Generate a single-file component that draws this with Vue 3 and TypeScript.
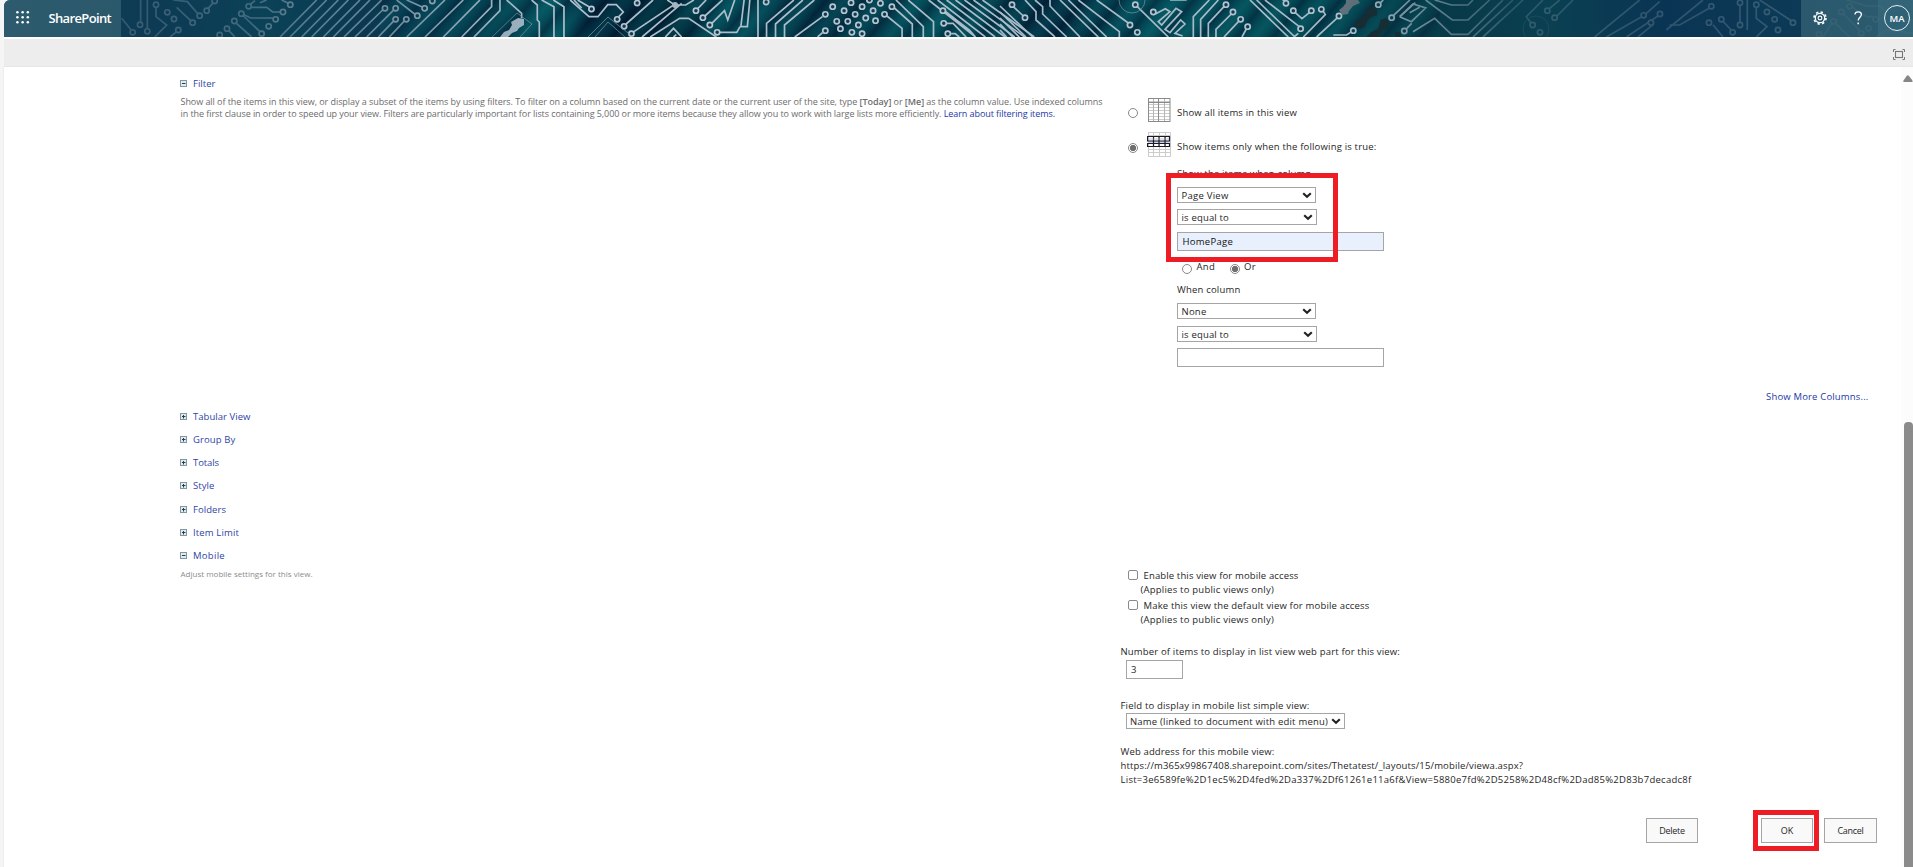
<script setup lang="ts">
import type { Directive } from 'vue'

// Spreads the letters of a single line so that it fills the given width.
const vFit: Directive<HTMLElement, number> = {
  mounted(el, binding) {
    const count = (el.textContent ?? '').length
    const natural = el.getBoundingClientRect().width
    el.style.letterSpacing = `${(binding.value - natural) / count}px`
  },
}

interface TraceGroup {
  transform: string
  sx: number
  path: string
  dots: [number, number][]
}

const bundle = Array.from({ length: 7 }, (_, i) => `M${1050 + i * 22} 0L${1165 + i * 24} 111`).join('')

const groups: TraceGroup[] = [
  {
    transform: 'translate(120 0) scale(.3333)',
    sx: 3,
    path:
      'M62 0V66M82 0V86M5 55L34 91M108 22V50L140 75L104 111M170 22L212 62M160 0L202 5L234 42M264 26L278 10M170 95L150 111' +
      'M392 12L405 2M394 22H440L458 36H480M372 44L392 54H458M348 69L395 111M326 91L345 111M420 95L370 48M505 10L485 0M440 0L420 8' +
      'M480 111L590 0M510 111L620 0M545 111L655 0M575 111L685 0M610 111L720 0M640 111L750 0M672 111L785 0M705 111L788 30M740 111L820 31' +
      'M775 111L820 64M808 111L852 64M860 111L975 0M830 0L884 42M860 0L907 21M915 111L1030 0M970 111L1080 0M1115 0V20L1025 111' +
      'M1140 0V32L1062 111M1160 0L1205 40V55M1235 0L1252 15V60L1258 66V111M1265 0L1302 20V111M1300 0L1332 20V111M1362 0L1385 24',
    dots: [[60, 74], [82, 94], [38, 97], [108, 14], [142, 37], [162, 57], [175, 90], [218, 68], [239, 47], [260, 32], [284, 3], [386, 19], [364, 41], [343, 63], [321, 86], [299, 105], [446, 79], [467, 58], [489, 36], [511, 14], [425, 101], [795, 25], [827, 25], [827, 58], [859, 58], [892, 47], [914, 25], [937, 3]],
  },
  {
    transform: 'translate(500 0) scale(.4082 .3333)',
    sx: 2.45,
    path:
      'M172 0L218 50H240L264 14H285L302 36L291 50M190 0L218 20M309 72L375 0M328 95L425 15H455L475 0M427 14L410 0' +
      'M348 111L445 10M368 111L440 55H462L530 111M405 111L425 85L445 111M425 111L432 104M485 25L505 0M502 48L545 0M519 70L550 32L558 60L575 0M538 97H580L588 80' +
      'M612 0L606 80H590L598 0M632 0V111M720 0L653 70V111M742 0L675 72V111M770 0L697 75V111M790 50L722 111M790 98L778 111' +
      'M948 48L985 85V111M966 24L1010 72V111M970 0L1037 80V111M1000 0L1062 65V111M1092 35L1150 90L1165 111M1095 70H1110L1142 111M1105 101H1115L1125 111' +
      bundle,
    dots: [[224, 27], [336, 9], [287, 58], [304, 79], [322, 101], [480, 32], [497, 53], [514, 75], [532, 97], [652, 6], [797, 43], [815, 20], [797, 92], [825, 64], [834, 86], [852, 64], [843, 32], [870, 43], [887, 20], [860, 8], [905, 0], [862, 97], [878, 75], [896, 54], [914, 32], [932, 10], [887, 101], [920, 62], [942, 43], [960, 20], [1085, 32], [1087, 70], [1097, 101]],
  },
  {
    transform: 'translate(1000 0) scale(.3333)',
    sx: 3,
    path:
      'M40 20L70 48M0 18L98 111M0 36L78 111M0 54L58 111M0 72L38 111M0 90L20 111M75 0L108 35V60L165 111M105 0L128 20V42L200 111M150 0V18L240 111M180 0L295 111M205 0L320 111' +
      'M235 0L358 95V111M290 0L385 69M412 20L505 111M510 0H560M466 42L496 26L510 35L475 65L485 75L528 25L545 35L495 88L510 98L542 60L555 72L525 100L548 108' +
      'M580 111V50L628 0M602 111V58L655 0M625 111V70L672 20M648 111V88L694 42M672 111L716 64M726 111L739 87' +
      'M750 0L865 111M770 0L885 111M795 0L898 80M882 111L895 100M848 0L856 4M886 38L906 56L929 37M970 34L976 44L910 111M1012 54L950 111M1055 95L1040 105H1000' +
      'M1142 8L1150 0M1180 47L1230 0M1200 50L1246 8M1220 86L1235 70',
    dots: [[36, 14], [75, 53], [390, 75], [412, 97], [406, 14], [460, 36], [678, 14], [699, 36], [722, 58], [743, 80], [902, 86], [858, 10], [880, 32], [934, 32], [964, 28], [1017, 48], [1060, 92], [1135, 14], [1175, 53], [1213, 93]],
  },
  {
    transform: 'translate(1413 0) scale(.3333)',
    sx: 3,
    path:
      'M-40 50L0 12L38 24L-5 65L-40 50M-10 38L20 22M0 95L65 55L115 103H165L270 0M38 0L118 60H165L230 0M65 0L115 15H165L180 0M180 111L300 0M210 111L330 0' +
      'M353 68L340 50L390 0M410 25L440 0M432 48L480 0M545 111L680 0M580 111L686 50M640 111L735 48M700 40L740 5M770 75H800L890 24M675 111L720 74' +
      'M981 14V68M1003 0V90M1030 22V55L1062 80L1030 111M930 64L955 90M1040 0L1135 62M900 74L930 111M870 0L760 90' +
      'M1268 70L1310 111M1292 42L1340 92M1316 20L1360 50H1382M1300 0L1360 18H1400L1440 50L1500 60M1230 111L1256 70M1390 111L1420 90L1500 100',
    dots: [[359, 75], [381, 97], [403, 32], [425, 53], [692, 46], [714, 68], [741, 42], [895, 19], [888, 68], [925, 58], [959, 97], [981, 75], [981, 8], [1030, 14], [1062, 36], [1085, 58], [1140, 68], [1095, 90], [1262, 64], [1310, 19], [1388, 58], [1285, 36], [1345, 100], [1367, 85], [1218, 103]],
  },
]

const waffle = Array.from({ length: 9 }, (_, i) => ({ x: 1 + (i % 3) * 5.2, y: 1 + Math.floor(i / 3) * 5 }))

const sections = [
  { label: 'Tabular View', width: 57.5 },
  { label: 'Group By', width: 42.5 },
  { label: 'Totals', width: 26 },
  { label: 'Style', width: 21.5 },
  { label: 'Folders', width: 33 },
  { label: 'Item Limit', width: 46 },
]
</script>

<template>
  <div class="page">
    <header class="suite">
      <svg class="circuit" width="1909" height="37" viewBox="4 0 1909 37" aria-hidden="true">
        <defs>
          <linearGradient id="base" gradientUnits="userSpaceOnUse" x1="0" y1="0" x2="1913" y2="0">
            <stop offset="0" stop-color="#154359" /><stop offset=".08" stop-color="#0d3a54" />
            <stop offset=".14" stop-color="#0b4258" /><stop offset=".19" stop-color="#0a3850" />
            <stop offset=".23" stop-color="#063c50" /><stop offset=".26" stop-color="#053c4c" />
            <stop offset=".29" stop-color="#075761" /><stop offset=".31" stop-color="#021c34" />
            <stop offset=".35" stop-color="#02202f" /><stop offset=".38" stop-color="#064b57" />
            <stop offset=".43" stop-color="#052f43" /><stop offset=".49" stop-color="#064f5a" />
            <stop offset=".55" stop-color="#032238" /><stop offset=".6" stop-color="#06505c" />
            <stop offset=".67" stop-color="#054a55" /><stop offset=".75" stop-color="#073947" />
            <stop offset=".81" stop-color="#0a4052" /><stop offset=".87" stop-color="#0a3453" />
            <stop offset="1" stop-color="#0e4059" />
          </linearGradient>
          <linearGradient id="bands" gradientUnits="userSpaceOnUse" x1="0" y1="0" x2="11" y2="9" spreadMethod="reflect">
            <stop offset="0" stop-color="#077078" stop-opacity=".3" /><stop offset="1" stop-color="#011a31" stop-opacity=".5" />
          </linearGradient>
          <linearGradient id="fade" gradientUnits="userSpaceOnUse" x1="0" y1="0" x2="1913" y2="0">
            <stop offset=".06" stop-color="#3a3a3a" /><stop offset=".13" stop-color="#505050" />
            <stop offset=".16" stop-color="#7c7c7c" /><stop offset=".21" stop-color="#a0a0a0" /><stop offset=".25" stop-color="#ddd" />
            <stop offset=".29" stop-color="#fff" /><stop offset=".7" stop-color="#f2f2f2" />
            <stop offset=".75" stop-color="#888" /><stop offset=".79" stop-color="#363636" /><stop offset="1" stop-color="#404040" />
          </linearGradient>
          <mask id="veil" maskUnits="userSpaceOnUse" x="0" y="0" width="1913" height="37">
            <rect width="1913" height="37" fill="url(#fade)" />
          </mask>
        </defs>
        <rect width="1913" height="37" fill="url(#base)" />
        <g mask="url(#veil)">
          <rect x="380" width="1060" height="37" fill="url(#bands)" />
          <g v-for="g in groups" :key="g.transform" :transform="g.transform">
            <path :d="g.path" class="trace" />
            <ellipse v-for="(d, i) in g.dots" :key="i" :cx="d[0]" :cy="d[1]" :rx="2.6 * g.sx" ry="7.8" class="via" />
          </g>
          <g class="thin">
            <path d="M492 37L517 13L532 24L520 37M588 37L608 17L633 37M595 37L608 22L625 37" />
            <circle cx="1132" cy="0" r="13" />
            <circle cx="1536" cy="29" r="13" />
          </g>
          <path class="solid" d="M500 37L504 32L509 30L512 25L511 22L518 18L524 19V25L519 28L517 31L512 33L508 37Z" />
          <circle cx="675" cy="5" r="3" class="solid" />
          <path class="grey" d="M1339 10L1343 7L1346 3V0H1358L1360 3L1353 6L1349 11L1348 14L1342 15Z" />
          <path class="black" d="M1354 25L1357 20L1362 18L1366 13L1365 10L1370 6L1377 9V15L1371 17L1367 21L1365 27L1360 29ZM1366 37L1371 32L1378 29L1380 23L1380 20L1386 18L1390 23L1388 29L1383 30L1378 37ZM1395 32H1400L1401 37H1395Z" />
        </g>
      </svg>
      <div class="brand">
        <svg width="14" height="13" viewBox="0 0 14 13" class="waffle">
          <circle v-for="(d, i) in waffle" :key="i" :cx="d.x + 0.4" :cy="d.y + 0.3" r="1.25" fill="#fff" />
        </svg>
        <span v-fit="62.5" class="name">SharePoint</span>
      </div>
      <div class="tools">
        <svg class="gear" width="14" height="14" viewBox="0 0 14 14" fill="none" stroke="#fff">
          <circle cx="7" cy="7" r="4.7" stroke-width="1.2" />
          <circle cx="7" cy="7" r="6" stroke-width="1.6" stroke-dasharray="2.35 2.35" />
          <circle cx="7" cy="7" r="1.9" stroke-width="1.1" />
        </svg>
        <svg class="help" width="9" height="14" viewBox="0 0 9 14" fill="none" stroke="#fff" stroke-width="1.3">
          <path d="M1 3.6C1 1.6 2.6.8 4.2.8C6 .8 7.4 1.8 7.4 3.6C7.4 6.1 4.2 6.4 4.2 9.6" />
          <path d="M4.2 11.6V13.2" stroke-width="1.5" />
        </svg>
        <div class="me"><span class="avatar">MA</span></div>
      </div>
    </header>

    <div class="ribbon">
      <svg width="13" height="12" viewBox="0 0 13 12" fill="none" stroke="#777">
        <rect x="2.5" y="2.5" width="7" height="6" stroke-width="1.1" />
        <path d="M.5 3V.5H2.5M9.5.5H11.5V3M.5 8V10.5H2.5M9.5 10.5H11.5V8" stroke-width="1" />
      </svg>
    </div>

    <main class="body">
      <div class="content">
        <section class="row filter">
          <div class="left">
            <h3 class="head">
              <svg class="toggle" width="7" height="7" viewBox="0 0 7 7"><rect x=".5" y=".5" width="6" height="6" /><path d="M2 3.5H5.5" /></svg>
              <span v-fit="22.5">Filter</span>
            </h3>
            <div class="desc">
              <div><span v-fit="922">Show all of the items in this view, or display a subset of the items by using filters. To filter on a column based on the current date or the current user of the site, type <b>[Today]</b> or <b>[Me]</b> as the column value. Use indexed columns</span></div>
              <div><span v-fit="874.5">in the first clause in order to speed up your view. Filters are particularly important for lists containing 5,000 or more items because they allow you to work with large lists more efficiently. <a>Learn about filtering items.</a></span></div>
            </div>
          </div>

          <div class="right">
            <div class="choice">
              <i class="radio"></i>
              <svg class="grid" width="24" height="25" viewBox="0 0 24 25" fill="none">
                <path d="M1 3.5H23M1 6.5H23M1 9.5H23M1 12.5H23M1 15.5H23M1 18.5H23M1 21.5H23" stroke="#ccc" />
                <path d="M6.5 1V24M17.5 1V24" stroke="#b5b5b5" />
                <path d="M11.5 1V24M1 4.5H23" stroke="#8a8a8a" />
                <rect x="1.5" y=".5" width="21.5" height="23" stroke="#8a8a8a" />
              </svg>
              <span v-fit="120">Show all items in this view</span>
            </div>
            <div class="choice second">
              <i class="radio on"></i>
              <svg class="grid" width="24" height="25" viewBox="0 0 24 25" fill="none">
                <path d="M1 .5H23.5V24.5H1.5V0M1 3.5H23M1 17.5H23M1 20.5H23M6.5 0V25M12.5 0V25M18.5 0V25" stroke="#ccc" />
                <rect x="1" y="9" width="22" height="2" fill="#c9d3e8" />
                <path d="M.5 4.5H22.5V9H.5ZM.5 11.5H22.5V14.5H.5ZM6.5 4V15M12 4V15M18 4V15" stroke="#191927" stroke-width="1.2" />
                <path d="M1 7H22" stroke="#aaa" stroke-width=".7" />
              </svg>
              <span v-fit="199.5">Show items only when the following is true:</span>
            </div>

            <div class="clauses">
              <div class="cap"><span v-fit="134.5">Show the items when column</span></div>
              <div class="select s1"><span v-fit="47">Page View</span><svg class="chev" viewBox="0 0 10 7"><path d="M1.2 1.3L5 4.7L8.8 1.3" /></svg></div>
              <div class="select s2"><span v-fit="47.5">is equal to</span><svg class="chev" viewBox="0 0 10 7"><path d="M1.2 1.3L5 4.7L8.8 1.3" /></svg></div>
              <div class="input filled"><span v-fit="50.5">HomePage</span></div>
              <div class="mark mark-filter"></div>
              <div class="andor">
                <i class="radio"></i><span v-fit="18.5" class="and">And</span>
                <i class="radio on"></i><span v-fit="12" class="or">Or</span>
              </div>
              <div class="cap when"><span v-fit="63.5">When column</span></div>
              <div class="select s3"><span v-fit="25">None</span><svg class="chev" viewBox="0 0 10 7"><path d="M1.2 1.3L5 4.7L8.8 1.3" /></svg></div>
              <div class="select s4"><span v-fit="47.5">is equal to</span><svg class="chev" viewBox="0 0 10 7"><path d="M1.2 1.3L5 4.7L8.8 1.3" /></svg></div>
              <div class="input blank"></div>
            </div>
            <div class="more"><a v-fit="102.5">Show More Columns...</a></div>
          </div>
        </section>

        <nav class="sections">
          <h3 v-for="s in sections" :key="s.label" class="head">
            <svg class="toggle" width="7" height="7" viewBox="0 0 7 7"><rect x=".5" y=".5" width="6" height="6" /><path d="M2 3.5H5.5M3.5 2V5.5" /></svg>
            <span v-fit="s.width">{{ s.label }}</span>
          </h3>
        </nav>

        <section class="row mobile">
          <div class="left">
            <h3 class="head">
              <svg class="toggle" width="7" height="7" viewBox="0 0 7 7"><rect x=".5" y=".5" width="6" height="6" /><path d="M2 3.5H5.5" /></svg>
              <span v-fit="32">Mobile</span>
            </h3>
            <div class="note"><span v-fit="132">Adjust mobile settings for this view.</span></div>
          </div>
          <div class="right">
            <div class="check"><i class="box"></i><span v-fit="155">Enable this view for mobile access</span></div>
            <div class="sub"><span v-fit="133.5">(Applies to public views only)</span></div>
            <div class="check next"><i class="box"></i><span v-fit="226">Make this view the default view for mobile access</span></div>
            <div class="sub"><span v-fit="133.5">(Applies to public views only)</span></div>

            <div class="line count"><span v-fit="279.5">Number of items to display in list view web part for this view:</span></div>
            <div class="input number"><span>3</span></div>

            <div class="line field"><span v-fit="189">Field to display in mobile list simple view:</span></div>
            <div class="select s5"><span v-fit="198">Name (linked to document with edit menu)</span><svg class="chev" viewBox="0 0 10 7"><path d="M1.2 1.3L5 4.7L8.8 1.3" /></svg></div>

            <div class="line web"><span v-fit="154">Web address for this mobile view:</span></div>
            <div class="line"><span v-fit="402.5">https://m365x99867408.sharepoint.com/sites/Thetatest/_layouts/15/mobile/viewa.aspx?</span></div>
            <div class="line"><span v-fit="571">List=3e6589fe%2D1ec5%2D4fed%2Da337%2Df61261e11a6f&amp;View=5880e7fd%2D5258%2D48cf%2Dad85%2D83b7decadc8f</span></div>
          </div>
        </section>

        <footer class="actions">
          <button type="button" class="delete"><span v-fit="25.5">Delete</span></button>
          <div class="okwrap">
            <button type="button"><span v-fit="12.5">OK</span></button>
            <div class="mark mark-ok"></div>
          </div>
          <button type="button" class="cancel"><span v-fit="26">Cancel</span></button>
        </footer>
      </div>

      <aside class="scroll">
        <svg width="10" height="7" viewBox="0 0 10 7"><path d="M1 7C0 7 0 6 .7 5.2L3.8 .8Q4.8 -.3 5.8 .8L9.3 5.2Q10 7 9 7Z" fill="#868686" /></svg>
        <div class="thumb"></div>
      </aside>
    </main>
  </div>
</template>

<style>
body {
  background: #f5f5f5;
  overflow: hidden;
}
</style>

<style scoped>
.page {
  box-sizing: border-box;
  width: 1913px;
  height: 867px;
  padding-left: 4px;
  display: flex;
  flex-direction: column;
  overflow: hidden;
  font: 9.5px/14px "Open Sans", "Noto Sans", sans-serif;
  color: #262626;
  white-space: nowrap;
}
.page span, .page a { display: inline-block; }
.suite {
  position: relative;
  height: 37px;
  flex: none;
  display: flex;
  justify-content: space-between;
  overflow: hidden;
  border-top-left-radius: 6px;
  color: #fff;
}
.circuit { position: absolute; left: 0; top: 0; }
.trace { fill: none; stroke: #aebfcd; stroke-width: 1.7; vector-effect: non-scaling-stroke; }
.via { fill: #123a4c; stroke: #b8c8d4; stroke-width: 1.7; vector-effect: non-scaling-stroke; }
.thin { fill: none; stroke: #8296a4; stroke-width: .7; }
.solid { fill: #a5b7c6; }
.grey { fill: #68757e; }
.black { fill: #1b292f; }
.brand {
  position: relative;
  width: 117px;
  box-sizing: border-box;
  padding-left: 12px;
  display: flex;
  background: rgba(53, 99, 116, .75);
}
.waffle { margin-top: 11px; flex: none; }
.name { margin: 8px 0 0 18.5px; font: 600 13px/20px "Open Sans", sans-serif; }
.tools { position: relative; display: flex; width: 112px; background: rgba(53, 99, 116, .75); }
.gear { margin: 11px 0 0 12px; flex: none; }
.help { margin: 11px 0 0 27px; flex: none; }
.me { margin-left: auto; width: 35px; background: rgba(64, 112, 130, .45); }
.avatar {
  box-sizing: border-box;
  width: 26px;
  height: 26px;
  margin: 5px 0 0 6px;
  border: 1px solid #e8eff2;
  border-radius: 50%;
  background: #2f6277;
  text-align: center;
  font: 600 9.5px/25px "Open Sans", sans-serif;
}
.ribbon {
  box-sizing: border-box;
  height: 30px;
  flex: none;
  border-top: 2px solid #fff;
  border-bottom: 1px solid #e6e6e6;
  background: #ededed;
  display: flex;
  justify-content: flex-end;
  padding: 10px 7px 0 0;
}
.body { display: flex; flex: 1; background: #fff; min-height: 0; border-left: 1px solid #eee; margin-left: -1px; }
.content { width: 1897px; flex: none; }
.row { display: flex; }
.left { box-sizing: border-box; width: 937px; padding-left: 177px; flex: none; }
.right { flex: 1; }
.head {
  display: flex;
  margin: 0;
  font-size: 9.5px;
  font-weight: 400;
  line-height: 14px;
  color: #2f45a5;
}
.toggle { margin: 3px 6px 0 -1px; flex: none; }
.toggle rect { fill: #e1eaee; stroke: #8198a3; }
.toggle path { fill: none; stroke: #233f4d; stroke-width: 1; }
.filter { height: 334px; }
.filter .head { margin-top: 10px; }
.desc { margin-top: 5px; margin-left: -.5px; font-size: 9px; line-height: 12px; color: #6c6c6c; }
.desc > div { height: 12px; }
.desc b { font-weight: 600; }
.desc a, .more a { color: #2238a8; }
.choice { display: flex; height: 25px; margin: 31px 0 0 187px; }
.choice.second { margin-top: 9px; }
.choice > span { margin: 8px 0 0 6px; }
.grid { margin-left: 9px; flex: none; }
.radio {
  box-sizing: border-box;
  width: 10px;
  height: 10px;
  margin-top: 10px;
  border: 1px solid #888;
  border-radius: 50%;
  background: #fff;
  flex: none;
}
.second .radio { margin-top: 11px; }
.radio.on { background: radial-gradient(circle, #6e6e6e 0 2.8px, #fff 3.5px); }
.clauses { position: relative; margin-left: 236px; }
.cap { height: 14px; padding-top: 10px; }
.select, .input {
  box-sizing: border-box;
  display: flex;
  border: 1px solid #a5a5a5;
  background: #fff;
}
.select { height: 16px; width: 139px; padding-left: 3.5px; line-height: 15px; justify-content: space-between; }
.chev { width: 10px; height: 7px; margin: 4px 3px 0 0; flex: none; fill: none; stroke: #222; stroke-width: 2.2; }
.s1 { margin-top: 6px; }
.s2 { margin-top: 6px; width: 140px; }
.input { height: 19px; width: 207px; padding-left: 4.5px; line-height: 18px; }
.filled { margin-top: 7px; background: #e8f0fe; color: #111; }
.andor { display: flex; height: 14px; margin-top: 9px; padding-left: 5px; }
.andor .radio { margin-top: 4px; }
.and { margin: 0 14.5px 0 4.5px; }
.or { margin-left: 4.5px; }
.when { padding-top: 0; margin-top: 9px; }
.s3 { margin-top: 6px; }
.s4 { margin-top: 7px; width: 140px; }
.blank { margin-top: 6px; }
.mark { position: absolute; box-sizing: border-box; border: 5px solid #ee1c25; }
.mark-filter { left: -11px; top: 16px; width: 172px; height: 89px; }
.more { margin: 23px 0 0 825px; }
.sections { padding: 9px 0 0 177px; }
.sections .head { height: 23.15px; }
.mobile { height: 269px; }
.note { margin-top: 5px; margin-left: -.5px; font-size: 8px; line-height: 12px; color: #8c8c8c; }
.mobile .right { padding: 20px 0 0 179.5px; }
.check { display: flex; height: 14px; padding-left: 7.5px; }
.box { box-sizing: border-box; width: 10px; height: 10px; margin: 1px 5.5px 0 0; border: 1px solid #8a8a8a; border-radius: 2px; background: #fff; }
.next { margin-top: 2px; }
.sub { height: 14px; padding-left: 20px; }
.line { height: 14px; }
.count { margin-top: 18px; }
.number { width: 57px; margin: 1px 0 0 5.5px; padding-left: 4px; }
.field { margin-top: 20px; }
.s5 { width: 219px; margin: 0 0 0 5.5px; padding-left: 3px; }
.web { margin-top: 16px; }
.actions { display: flex; margin: 0 0 0 1642px; }
button {
  box-sizing: border-box;
  width: 52px;
  height: 25px;
  padding: 0;
  border: 1px solid #a5a5a5;
  background: #f9f9f9;
  color: #262626;
  font: 9px/23px "Open Sans", "Noto Sans", sans-serif;
}
.okwrap { position: relative; margin: 0 11px 0 63px; display: flex; }
.mark-ok { left: -8px; top: -8px; width: 66px; height: 41px; }
.cancel { width: 53px; }
.scroll { width: 12px; background: #fcfcfc; display: flex; flex-direction: column; align-items: flex-end; }
.scroll svg { margin-top: 8px; flex: none; }
.thumb { width: 9px; margin-top: 340px; flex: 1; background: #8b8b8b; border-radius: 4px 4px 0 0; }
</style>
